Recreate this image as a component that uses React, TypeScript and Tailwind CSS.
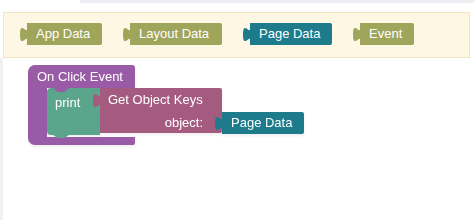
import React from 'react';

const OLIVE = '#9fa55b';
const TEAL = '#1d7b8c';
const PURPLE = '#995ba5';
const GREEN = '#5ba58c';
const PINK = '#a55b80';

const Tab: React.FC<{ color: string; className?: string }> = ({ color, className }) => (
    <svg width="8" height="15" viewBox="0 0 8 15" className={`overflow-visible shrink-0 ${className ?? ''}`}>
        <path d="M8 0 C8 10 0 -8 0 7.5 S8 5 8 15 Z" fill={color} />
    </svg>
);

const ValueBlock: React.FC<{ label: string; color: string; width: string }> = ({ label, color, width }) => (
    <div className="flex items-start">
        <Tab color={color} className="mt-[4px] -mr-px" />
        <div
            className={`h-[22px] ${width} flex items-center pl-[9px] rounded-r-[2px] whitespace-nowrap`}
            style={{ backgroundColor: color }}
        >
            {label}
        </div>
    </div>
);

const App: React.FC = () => {
    return (
        <div className="w-[474px] h-[220px] bg-white flex flex-col overflow-hidden font-['Liberation_Sans',Arial,sans-serif] text-[13px] text-white">
            <div className="h-[3px] flex shrink-0">
                <div className="w-[80px] bg-white" />
                <div className="flex-1 bg-[#ededf3]" />
            </div>
            <div className="flex flex-1 min-h-0">
                <div className="w-[3px] bg-[#f1f1f1] mt-[55px]" />
                <div className="flex-1 flex flex-col pt-[9px]">
                    {/* flyout / toolbox */}
                    <div className="h-[46px] mr-[4px] bg-[#fdf7e4] border border-[#f3e5c3] flex items-start gap-[21px] pl-[16px] pt-[10px]">
                        <ValueBlock label="App Data" color={OLIVE} width="w-[75px]" />
                        <ValueBlock label="Layout Data" color={OLIVE} width="w-[92px]" />
                        <ValueBlock label="Page Data" color={TEAL} width="w-[82px]" />
                        <ValueBlock label="Event" color={OLIVE} width="w-[54px]" />
                    </div>

                    {/* workspace */}
                    <div className="flex-1 relative">
                        <div className="absolute left-[25px] top-[7px] flex flex-col drop-shadow-[0_2px_1px_rgba(0,0,0,0.06)]">
                            <div
                                className="h-[23px] w-[107px] flex items-center pl-[9px] rounded-tl-[7px] rounded-tr-[3px] whitespace-nowrap"
                                style={{ backgroundColor: PURPLE }}
                            >
                                On Click Event
                            </div>
                            <div className="flex h-[49px]">
                                <div className="w-[19px]" style={{ backgroundColor: PURPLE }} />
                                {/* print block */}
                                <div
                                    className="relative w-[53px] h-[47px] pl-[8px] pt-[4px] rounded-[4px] rounded-r-none"
                                    style={{ backgroundColor: GREEN }}
                                >
                                    <div
                                        className="absolute left-[6px] top-0 w-[16px] h-[4px] [clip-path:polygon(0_0,100%_0,70%_100%,30%_100%)]"
                                        style={{ backgroundColor: PURPLE }}
                                    />
                                    <div
                                        className="absolute left-[6px] top-[47px] w-[16px] h-[3px] [clip-path:polygon(0_0,100%_0,70%_100%,30%_100%)]"
                                        style={{ backgroundColor: GREEN }}
                                    />
                                    <div className="mt-[1px]">print</div>
                                </div>
                                {/* get object keys */}
                                <div className="relative flex items-start">
                                    <Tab color={PINK} className="mt-[5px] -ml-[7px] -mr-px" />
                                    <div
                                        className="relative w-[122px] h-[45px] flex flex-col rounded-r-[2px]"
                                        style={{ backgroundColor: PINK }}
                                    >
                                        <div className="h-[24px] flex items-center pl-[8px] whitespace-nowrap">Get Object Keys</div>
                                        <div className="h-[21px] flex items-center justify-end pr-[19px]">object:</div>
                                        <div className="absolute left-[115px] top-[24px]">
                                            <ValueBlock label="Page Data" color={TEAL} width="w-[82px]" />
                                        </div>
                                    </div>
                                </div>
                            </div>
                            <div
                                className="h-[8px] w-[107px] rounded-bl-[7px] rounded-br-[2px]"
                                style={{ backgroundColor: PURPLE }}
                            />
                        </div>
                    </div>
                </div>
            </div>
        </div>
    );
};

export default App;
